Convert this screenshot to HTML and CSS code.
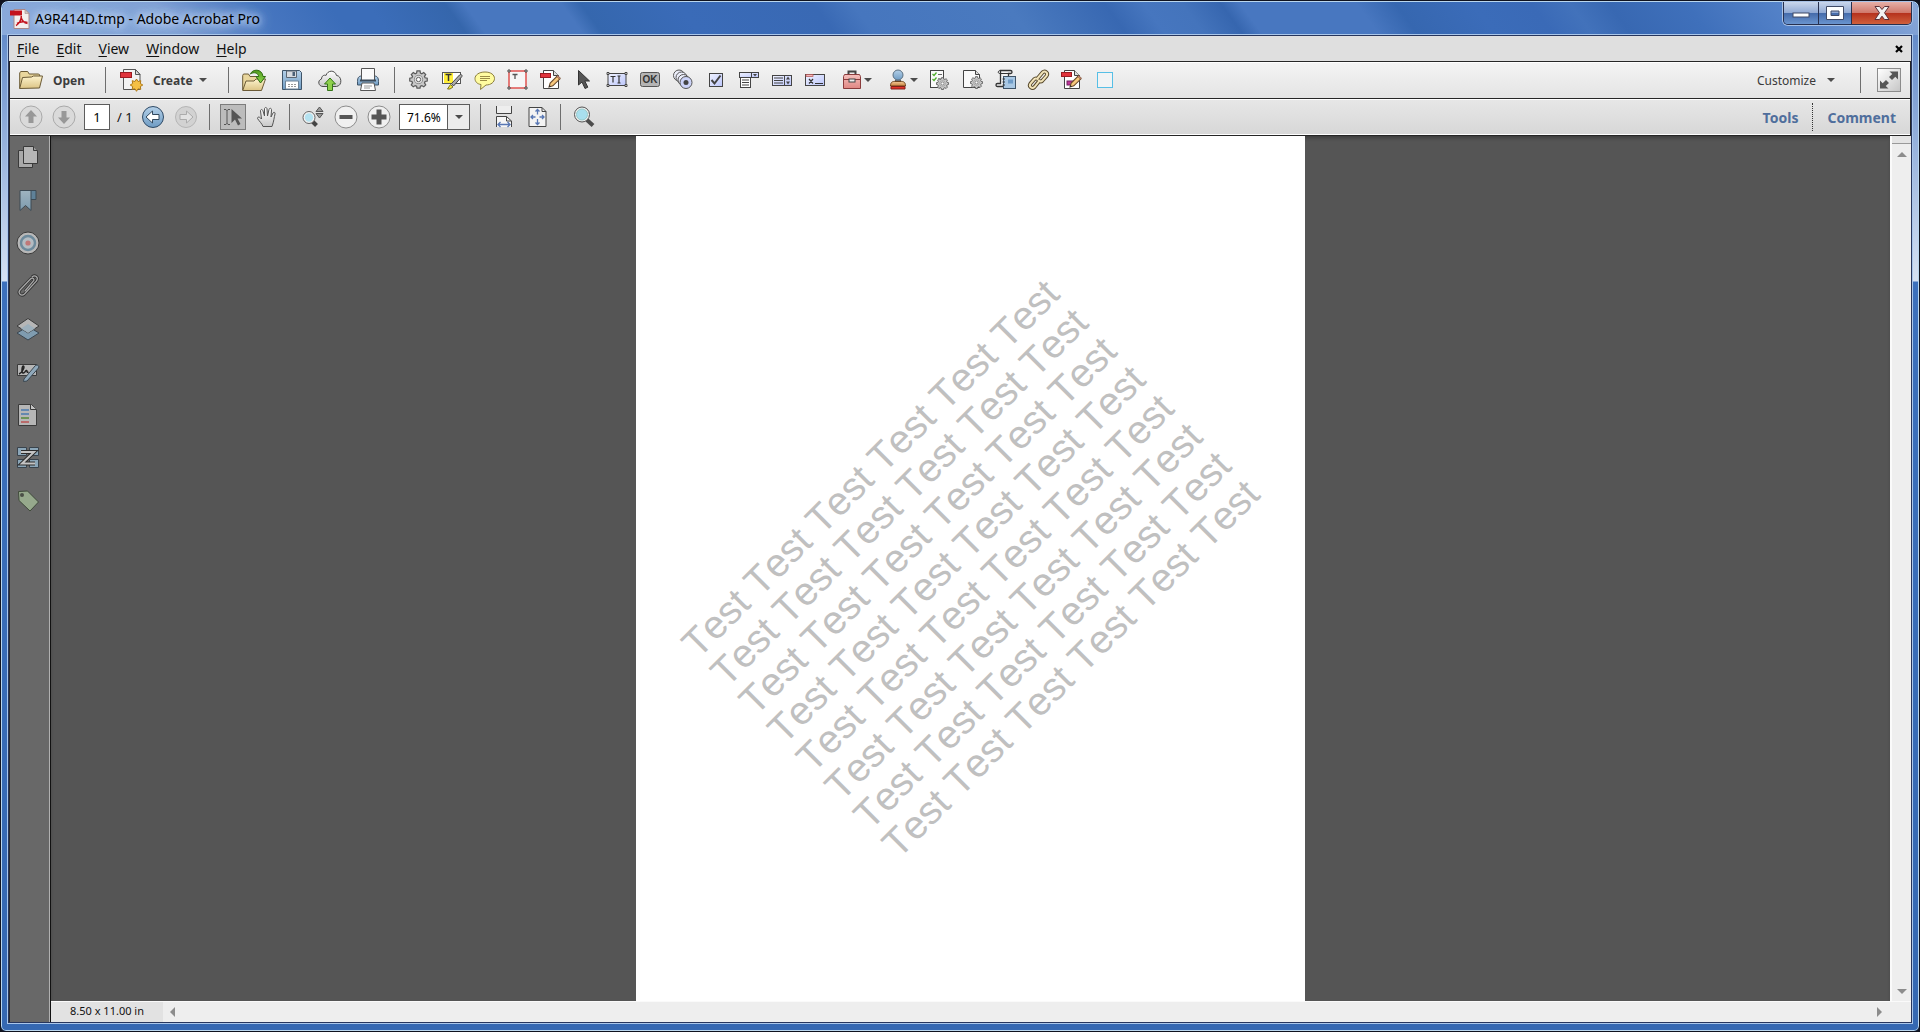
FILE: index.html
```
<!DOCTYPE html>
<html lang="en">
<head>
<meta charset="utf-8">
<title>A9R414D.tmp - Adobe Acrobat Pro</title>
<link rel="stylesheet" href="styles.css">
</head>
<body>
<svg class="defs" width="0" height="0" aria-hidden="true">
  <defs>
    <linearGradient id="folder" x1="0" y1="0" x2="0" y2="1"><stop offset="0" stop-color="#fdf3cd"/><stop offset="1" stop-color="#dcc485"/></linearGradient>
    <linearGradient id="steel" x1="0" y1="0" x2="0" y2="1"><stop offset="0" stop-color="#b4d0e8"/><stop offset="1" stop-color="#6f9cc4"/></linearGradient>
    <linearGradient id="cloud" x1="0" y1="0" x2="0" y2="1"><stop offset="0" stop-color="#fff"/><stop offset="1" stop-color="#c8c8c8"/></linearGradient>
    <linearGradient id="green" x1="0" y1="0" x2="0" y2="1"><stop offset="0" stop-color="#4f9a1c"/><stop offset="1" stop-color="#8fd84e"/></linearGradient>
    <linearGradient id="lilac" x1="0" y1="0" x2="1" y2="1"><stop offset="0" stop-color="#f0f3ff"/><stop offset="1" stop-color="#bcc6fb"/></linearGradient>
    <linearGradient id="pink" x1="0" y1="0" x2="0" y2="1"><stop offset="0" stop-color="#f5c0bd"/><stop offset="1" stop-color="#e08783"/></linearGradient>
    <linearGradient id="wood" x1="0" y1="0" x2="0" y2="1"><stop offset="0" stop-color="#f3cd9b"/><stop offset="1" stop-color="#c97f3a"/></linearGradient>
    <linearGradient id="mute" x1="0" y1="0" x2="0" y2="1"><stop offset="0" stop-color="#9fb4c0"/><stop offset="1" stop-color="#7d9bae"/></linearGradient>
    <symbol id="gear" viewBox="0 0 20 20">
      <path d="M8.400 1h3.200l.4 2.300 1.500.6 2-1.300 2.100 2.100-1.300 2 .6 1.500 2.300.4v3l-2.300.5-.6 1.500 1.300 2-2.100 2.100-2-1.300-1.500.6-.4 2.200H8.400l-.4-2.200-1.500-.6-2 1.300-2.100-2.100 1.300-2-.6-1.500L.8 11.600v-3l2.300-.4.6-1.500-1.300-2 2.100-2.100 2 1.300L8 3.300z" fill="#c9c9c9" stroke="#5a5a5a" stroke-width="1.300"/>
      <circle cx="10" cy="10" r="4.300" fill="#e4e4e4" stroke="#8a8a8a"/><circle cx="10" cy="10" r="2.300" fill="#fafafa" stroke="#5a5a5a"/>
    </symbol>
    <symbol id="pencil" viewBox="0 0 12 12"><path d="M1 11l1-3.500L8.500 1 11 3.500 4.500 10z" fill="#f7c77c" stroke="#6a4a2a"/><path d="M8.200 1.300l2.500 2.500L11.500 3 9 .5z" fill="#f3a29b" stroke="#6a4a2a" stroke-width=".6"/><path d="M.7 11.300l.6-2 1.500 1.400z" fill="#333"/></symbol>
  </defs>
</svg>

<div class="window">
  <header class="titlebar">
    <svg class="app-icon" viewBox="0 0 20 20"><path d="M4 .5h11l4 4v15H4z" fill="#f4f0ee" stroke="#a88"/><path d="M15 .5v4h4z" fill="#cfc8c4" stroke="#a88" stroke-width=".6"/><path d="M0 1.500h12v5H0z" fill="#c4121c"/><path d="M6 16.500c3-1.500 5.600-6 5.300-9.500M11 8c.8 3.500 3 6 6.500 6.500M7 14.500c3-1.800 7-2 10.500-1" fill="none" stroke="#c4121c" stroke-width="1.500"/></svg>
    <h1 class="title">A9R414D.tmp - Adobe Acrobat Pro</h1>
    <div class="window-buttons">
      <button class="win min" aria-label="Minimize"><svg width="20" height="14" viewBox="0 0 20 14"><rect x="2" y="7" width="16" height="4" fill="#fff" stroke="#404a66"/></svg></button>
      <button class="win max" aria-label="Maximize"><svg width="20" height="14" viewBox="0 0 20 14"><path d="M1.500.5h17v13h-17zM6 5v4.500h8V5z" fill="#fff" fill-rule="evenodd" stroke="#404a66"/></svg></button>
      <button class="win close" aria-label="Close"><svg width="16" height="14" viewBox="0 0 16 14"><path d="M1 .5h4.500L8 3.500 10.500.5H15L10.500 6.800 15 13.500h-4.500L8 10.200 5.500 13.500H1L5.500 6.800z" fill="#f2f2f2" stroke="#5a3038"/></svg></button>
    </div>
  </header>

  <div class="frame">
    <nav class="menubar">
      <button><u>F</u>ile</button><button><u>E</u>dit</button><button><u>V</u>iew</button><button><u>W</u>indow</button><button><u>H</u>elp</button>
      <button class="doc-close" aria-label="Close document"><svg width="8" height="8" viewBox="0 0 8 8"><path d="M1 1l6 6M7 1L1 7" stroke="#000" stroke-width="2.200"/></svg></button>
    </nav>

    <div class="toolbar main-tools">
      <div class="group g-open">
        <button class="labelled"><svg class="ic" viewBox="0 0 24 24"><path d="M.7 20.500V5l1-1.500h7l1.500 2.500h9.500l1 1v2" fill="#e9d69d" stroke="#6b5a36"/><path d="M.7 20.500L3.500 9.500l9-.5 2-1h9L20.500 20z" fill="url(#folder)" stroke="#6b5a36"/></svg><b>Open</b></button>
      </div>
      <div class="group g-create">
        <button class="labelled"><svg class="ic" viewBox="0 0 24 24"><path d="M4.500 1.500h12l4.500 5v15H4.500z" fill="#f3f3f3" stroke="#555"/><path d="M16.500 1.500v5H21z" fill="#ddd" stroke="#555"/><rect x="1.500" y="4.500" width="11" height="5" fill="#e0343c" stroke="#9c1c22"/><path d="M17.500 11l1.500 2.500 2.800-.8-.5 2.800 2.500 1.500-2.500 1.500.5 2.800-2.800-.5-1.500 2.500-1.500-2.500-2.800.5.500-2.800-2.500-1.500 2.500-1.500-.5-2.800 2.800.8z" fill="#f5c044" stroke="#b07a18"/></svg><b>Create</b><i class="caret"></i></button>
      </div>
      <div class="group g-file">
        <button class="tool wide" aria-label="Open file"><svg class="ic" viewBox="0 0 24 24"><path d="M.7 22V7.500L1.500 6h5L8 8.500h11.500V12" fill="#e9d69d" stroke="#6b5a36"/><path d="M.7 22.500L4 13h8l2-2h9.500l-4 11.500z" fill="url(#folder)" stroke="#6b5a36"/><path d="M8.500 6C10 1 20 0 21 8.500h2.500L18.500 15 14 8.500h2.700C16.500 5 11.500 3.500 8.500 6z" fill="url(#green)" stroke="#2f6b12"/></svg></button>
        <button class="tool wide" aria-label="Save"><svg class="ic" viewBox="0 0 24 24"><path d="M2.500 2.500h17l2 2v17h-19z" fill="url(#steel)" stroke="#3f5468"/><path d="M6.500 3v6.500h10V3z" fill="#d7dbe0" stroke="#5a6672"/><path d="M12.500 4h2.500v4h-2.500z" fill="#4a6076"/><path d="M5.500 13h13v8h-13z" fill="#fff" stroke="#6d8296"/><path d="M8 16.500h9M8 18.500h9" stroke="#999" stroke-dasharray="2 1"/></svg></button>
        <button class="tool wide" aria-label="Upload"><svg class="ic" viewBox="0 0 24 24"><path d="M5 18.500C.5 18.500-1 12.500 3.500 11c0-3 2.500-4.500 4.500-3.500C9.500 2 17 1.500 18.500 7.500c5 0 6.500 10 0 11z" fill="url(#cloud)" stroke="#4c4c4c"/><path d="M12 10l5.500 6h-3v6.500h-5V16h-3z" fill="#8fd04c" stroke="#35761a"/></svg></button>
        <button class="tool wide" aria-label="Print"><svg class="ic" viewBox="0 0 24 24"><path d="M1.500 13.500c0-4 1.500-5.500 4-5.500h13c2.500 0 4 1.500 4 5.500v3.500h-21z" fill="url(#steel)" stroke="#3f5468"/><path d="M5.500.5h13v12h-13z" fill="#fafafa" stroke="#555"/><path d="M4 12.500h16" stroke="#3c4a58" stroke-width="2"/><path d="M6 15h12l1.500 7.500h-15z" fill="#fff" stroke="#555"/><path d="M8 18h8M8 20h6" stroke="#999"/></svg></button>
      </div>
      <div class="group g-quick">
        <button class="tool" aria-label="Settings"><svg class="ic" viewBox="0 0 24 24"><use href="#gear" x="2" y="2" width="19" height="19"/></svg></button>
        <button class="tool" aria-label="Highlight text"><svg class="ic" viewBox="0 0 24 24"><rect x="2.500" y="4.500" width="18" height="11" fill="#fff" stroke="#555"/><rect x="4" y="5" width="9" height="10" fill="#ffef3a"/><path d="M5.500 6.500h6M8.500 6.500V13" stroke="#333" stroke-width="1.500"/><path d="M11.500 15.500l8-8.500c1.500-1.500 3.500.5 2 2L13.500 18z" fill="#aaa" stroke="#444"/><path d="M10.500 16.500l2.500 2.500-3 2H7.500z" fill="#f1e53a" stroke="#7d7420"/></svg></button>
        <button class="tool" aria-label="Comment note"><svg class="ic" viewBox="0 0 24 24"><path d="M12 4c6 0 9.500 3 9.500 6.500S18 17 13 17l-5.500 4.500.5-5C4 16 2 13.500 2 10.500 2 7 6 4 12 4z" fill="#fffca0" stroke="#8c7f3c"/><path d="M7 8.500h10M7 10.500h10M7 12.500h7" stroke="#9c8d46"/></svg></button>
        <button class="tool" aria-label="Text box"><svg class="ic" viewBox="0 0 24 24"><rect x="3" y="3" width="17" height="17" fill="#f6f6f6" stroke="#e05350" stroke-width="1.500"/><path d="M6.500 6.500h5M9 6.500V11" stroke="#555" stroke-width="1.300"/><path d="M2 2h2v2H2zM19 2h2v2h-2zM2 19h2v2H2zM19 19h2v2h-2z" fill="#fff" stroke="#444"/></svg></button>
        <button class="tool" aria-label="Edit document"><svg class="ic" viewBox="0 0 24 24"><path d="M4.500 2.500h10l5 5v13h-15z" fill="#fff" stroke="#444"/><path d="M14.500 2.500v5h5" fill="#ddd" stroke="#444"/><rect x="1.500" y="5.500" width="10" height="4" fill="#e0343c" stroke="#9c1c22"/><use href="#pencil" x="9" y="6" width="13" height="15"/></svg></button>
        <button class="tool" aria-label="Select object"><svg class="ic" viewBox="0 0 24 24"><path d="M6.500 2.500v14.500l3.500-3 3 6.500 2.800-1.300-3-6.200h4.700z" fill="#555" stroke="#333"/></svg></button>
        <button class="tool" aria-label="Text field"><svg class="ic" viewBox="0 0 24 24"><rect x="3" y="5.500" width="18" height="12" fill="url(#lilac)" stroke="#444"/><path d="M5.500 8.500h5M8 8.500v6M12.500 8h3M14 8v7M12.500 15h3" stroke="#333" stroke-width="1.200" fill="none"/><path d="M2 4.500h2v2H2zM20 4.500h2v2h-2zM2 16.500h2v2H2zM20 16.500h2v2h-2z" fill="#fff" stroke="#444"/></svg></button>
        <button class="tool" aria-label="Button field"><svg class="ic" viewBox="0 0 24 24"><rect x="2.500" y="4.500" width="19" height="14" rx="2" fill="#b4b4b4" stroke="#555"/><text x="12" y="15" class="ok">OK</text></svg></button>
        <button class="tool" aria-label="Radio button"><svg class="ic" viewBox="0 0 24 24"><g fill="#eceefa" stroke="#555"><circle cx="8" cy="7.500" r="5.500"/><circle cx="10.500" cy="9.500" r="5.500"/><circle cx="12.500" cy="12" r="5.500"/></g><circle cx="15" cy="14.500" r="6" fill="#ccd3f8" stroke="#555"/><circle cx="15" cy="14.500" r="2.500" fill="#444"/></svg></button>
        <button class="tool" aria-label="Check box"><svg class="ic" viewBox="0 0 24 24"><rect x="5.500" y="5.500" width="13" height="13" fill="url(#lilac)" stroke="#444"/><path d="M7.500 12l3 3.500 6-8" fill="none" stroke="#444" stroke-width="2"/></svg></button>
        <button class="tool" aria-label="Combo box"><svg class="ic" viewBox="0 0 24 24"><rect x="2.500" y="4.500" width="19" height="5" fill="url(#lilac)" stroke="#444"/><path d="M14.500 4.500v5" stroke="#444"/><path d="M16 6h4l-2 2.500z" fill="#444"/><rect x="3.500" y="9.500" width="10" height="10" fill="#fff" stroke="#444"/><path d="M5 12h7M5 14.500h7M5 17h7" stroke="#444"/></svg></button>
        <button class="tool" aria-label="List box"><svg class="ic" viewBox="0 0 24 24"><rect x="2.500" y="7.500" width="19" height="10" fill="url(#lilac)" stroke="#444"/><path d="M14.500 7.500v10M4 10h9M4 12.500h9M4 15h9" stroke="#444"/><path d="M18 8.500l2 3h-4zM18 16.500l2-3h-4z" fill="#444"/></svg></button>
        <button class="tool" aria-label="Signature field"><svg class="ic" viewBox="0 0 24 24"><rect x="2.500" y="6.500" width="19" height="11" fill="url(#lilac)" stroke="#444"/><rect x="3" y="6.500" width="7" height="2" fill="#f5b9b9" stroke="#b05050" stroke-width=".7"/><path d="M6 11l4 4.500M10 11l-4 4.500M12 15.500h8" stroke="#333" stroke-width="1.200"/></svg></button>
        <button class="tool menu" aria-label="Toolbox"><svg class="ic" viewBox="0 0 24 24"><path d="M8.500 6.500v-3h7v3" fill="none" stroke="#444" stroke-width="2"/><path d="M3.500 8.500l1-2h15l1 2v12h-17z" fill="url(#pink)" stroke="#8a3c3c"/><path d="M3.500 11.500h17" stroke="#8a3c3c"/><rect x="9" y="11" width="6" height="3" fill="#eee" stroke="#444"/></svg><i class="caret"></i></button>
        <button class="tool menu" aria-label="Stamp"><svg class="ic" viewBox="0 0 24 24"><path d="M9.500 12h5l1 4h-7z" fill="#8a8f96" stroke="#555"/><circle cx="12" cy="7" r="5" fill="url(#steel)" stroke="#5b6f80"/><path d="M4.500 18c0-4 2-4.500 4-4.500h7c2 0 4 .5 4 4.500z" fill="url(#wood)" stroke="#6d4520"/><path d="M5 18.500h14v2.500H5z" fill="#e33228" stroke="#80201a"/></svg><i class="caret"></i></button>
        <button class="tool" aria-label="Checklist"><svg class="ic" viewBox="0 0 24 24"><rect x="2.500" y="2.500" width="13" height="17" fill="#fafafa" stroke="#444"/><path d="M4.500 6l1.500 1.500L8.500 4.500M4.500 11l1.500 1.500L8.500 9.500" fill="none" stroke="#4fae2c" stroke-width="1.300"/><path d="M10 6.500h4M10 11h3" stroke="#666"/><use href="#gear" x="8" y="9" width="13" height="13"/></svg></button>
        <button class="tool" aria-label="Document settings"><svg class="ic" viewBox="0 0 24 24"><path d="M2.500 2.500h12l4 4v13h-16z" fill="#fafafa" stroke="#444"/><path d="M14.500 2.500v4h4" fill="#ddd" stroke="#444"/><use href="#gear" x="9" y="8" width="13" height="13"/></svg></button>
        <button class="tool" aria-label="Script"><svg class="ic" viewBox="0 0 24 24"><path d="M6.500 2.500h10c2 0 2 3 0 3h-2v13h-11c-2 0-2-3 0-3h3z" fill="#f2f2f2" stroke="#333" stroke-width="1.300"/><path d="M6.500 2.500c-3 0-3 3.500 0 3h9" fill="none" stroke="#333"/><rect x="9.500" y="8.500" width="12" height="12" fill="#a9c8e4" stroke="#3f5468"/><path d="M8.500 11h2.500M8.500 14h2.500M8.500 17h2.500" stroke="#333"/><rect x="14" y="11.500" width="5" height="4" fill="#6f9cc8"/></svg></button>
        <button class="tool" aria-label="Link"><svg class="ic" viewBox="0 0 24 24"><g fill="none"><path d="M10.500 10.500l5-6c2.500-2.500 6 .5 4 3.500l-4 4.500c-1.500 1.500-3.500 1-4-.5M13 12l-5.500 7c-2.500 2.500-6-.5-4-3.500L7 11.500c1.500-1.500 3.500-1 4 .5" stroke="#57492c" stroke-width="4"/><path d="M10.500 10.500l5-6c2.500-2.500 6 .5 4 3.500l-4 4.500c-1.500 1.500-3.500 1-4-.5M13 12l-5.500 7c-2.500 2.500-6-.5-4-3.500L7 11.500c1.500-1.500 3.500-1 4 .5" stroke="#f1e3b8" stroke-width="2"/></g></svg></button>
        <button class="tool" aria-label="Edit form"><svg class="ic" viewBox="0 0 24 24"><path d="M4.500 2.500h10l5 5v13h-15z" fill="#fff" stroke="#444"/><path d="M14.500 2.500v5h5" fill="#ddd" stroke="#444"/><rect x="1.500" y="4.500" width="10" height="4" fill="#e0343c" stroke="#9c1c22"/><rect x="7" y="13" width="7" height="4" fill="#c0359a" stroke="#702060"/><use href="#pencil" x="9" y="6" width="13" height="15"/></svg></button>
        <button class="tool" aria-label="Rectangle"><svg class="ic" viewBox="0 0 24 24"><rect x="4.500" y="4.500" width="15" height="15" fill="#f1f3f4" stroke="#56bfe6"/></svg></button>
      </div>
      <div class="group g-end">
        <button class="customize">Customize<i class="caret"></i></button>
        <button class="expand" aria-label="Read mode"><svg width="20" height="20" viewBox="0 0 20 20"><path d="M10.500 1.500H19v8l-2.700-2.700-3.300 3.200-3-3 3.300-3zM9.500 18.500H1v-8l2.700 2.700L7 10l3 3-3.300 3z" fill="#555"/></svg></button>
      </div>
    </div>

    <div class="toolbar nav-tools">
      <div class="group g-page">
        <button class="tool" aria-label="Previous page"><svg class="ic" viewBox="0 0 24 24"><circle cx="12" cy="12" r="11" fill="#dadada" stroke="#a9a9a9"/><path d="M12 5l6 6.500h-3.500V18h-5v-6.500H6z" fill="#989898"/></svg></button>
        <button class="tool" aria-label="Next page"><svg class="ic" viewBox="0 0 24 24"><circle cx="12" cy="12" r="11" fill="#dadada" stroke="#a9a9a9"/><path d="M12 19l6-6.500h-3.500V6h-5v6.500H6z" fill="#989898"/></svg></button>
        <input class="page-number" type="text" value="1" aria-label="Page number">
        <span class="page-total">/ 1</span>
        <button class="tool" aria-label="Previous view"><svg class="ic" viewBox="0 0 24 24"><circle cx="12" cy="12" r="10.500" fill="url(#steel)" stroke="#2f4a66"/><path d="M5 12l6.500-6v3.500H18v5h-6.500V18z" fill="#fff" stroke="#33495e"/></svg></button>
        <button class="tool" aria-label="Next view"><svg class="ic" viewBox="0 0 24 24"><circle cx="12" cy="12" r="10.500" fill="#d2d2d2" stroke="#b5b5b5"/><path d="M19 12l-6.500-6v3.500H6v5h6.500V18z" fill="#e2e2e2" stroke="#ababab"/></svg></button>
      </div>
      <div class="group g-select">
        <button class="tool pressed" aria-label="Selection tool"><svg class="ic" viewBox="0 0 24 24"><path d="M3 4.500h2l1 1 1-1h2M3 19.500h2l1-1 1 1h2M6 5v14" fill="none" stroke="#555"/><path d="M10.500 4v14l3.500-3.500 3 6 2.500-1.500-3-5.500H21z" fill="#555"/></svg></button>
        <button class="tool" aria-label="Hand tool"><svg class="ic" viewBox="0 0 24 24"><path d="M8 21.500c-1-3-4-5.500-5.500-8 0-2 2-2 4 .5L5.500 6c0-2 2-2 2.500 0l1.500 5L9.500 4c0-2 2.500-2 2.500 0l.5 7 1.500-6.500c.5-2 2.500-1.500 2.500.5L16 12l2-4c1-1.500 2.500-.5 2 1-1 3.500-1 7-3 12.500z" fill="url(#cloud)" stroke="#555"/></svg></button>
      </div>
      <div class="group g-zoom">
        <button class="tool" aria-label="Marquee zoom"><svg class="ic" viewBox="0 0 24 24"><path d="M11 16l4.500 4.500" stroke="#444" stroke-width="4"/><circle cx="8" cy="12.500" r="6" fill="#f2f2f2" stroke="#666"/><circle cx="8" cy="12.500" r="4.200" fill="#b4e2f0"/><path d="M18.500 2l3.500 4.500h-7zM18.500 13l3.500-4.500h-7z" fill="#999" stroke="#555"/></svg></button>
        <button class="tool" aria-label="Zoom out"><svg class="ic" viewBox="0 0 24 24"><circle cx="12" cy="12" r="11" fill="#f0f0f0" stroke="#8b8b8b"/><path d="M5.500 10h13v4h-13z" fill="#555"/></svg></button>
        <button class="tool" aria-label="Zoom in"><svg class="ic" viewBox="0 0 24 24"><circle cx="12" cy="12" r="11" fill="#f0f0f0" stroke="#8b8b8b"/><path d="M4.500 9.500h5v-5h5v5h5v5h-5v5h-5v-5h-5z" fill="#555"/></svg></button>
        <div class="zoom-box"><input type="text" value="71.6%" aria-label="Zoom"><button aria-label="Zoom levels"><i class="caret"></i></button></div>
      </div>
      <div class="group g-fit">
        <button class="tool" aria-label="Fit width"><svg class="ic" viewBox="0 0 24 24"><path d="M4.500 1v7.500h15V1" fill="#eee" stroke="#444"/><path d="M4.500 22V11.500h10l5 4.500v6" fill="#f6f6f6" stroke="#444"/><path d="M14.500 11.500V16h5" fill="none" stroke="#444"/><path d="M6 19.500h12M8.500 17L6 19.500 8.500 22M15.500 17l2.500 2.500-2.500 2.500" stroke="#5877b4" stroke-width="1.300" fill="none"/></svg></button>
        <button class="tool" aria-label="Fit page"><svg class="ic" viewBox="0 0 24 24"><path d="M4 2.500h13l4 4v15H4z" fill="#f3f3f3" stroke="#444"/><path d="M17 2.500v4h4" fill="none" stroke="#444"/><path d="M12.500 4.500v5M12.500 14v5.500M6 12h4.500M14.500 12H19M10.500 6.500l2-2 2 2M10.500 17.500l2 2 2-2M8 10l-2 2 2 2M17 10l2 2-2 2" stroke="#5877b4" stroke-width="1.300" fill="none"/></svg></button>
      </div>
      <div class="group g-find">
        <button class="tool" aria-label="Find"><svg class="ic" viewBox="0 0 24 24"><path d="M15 15l6 5.500" stroke="#4c4c4c" stroke-width="4"/><circle cx="10" cy="9.500" r="7.500" fill="#eee" stroke="#555"/><circle cx="10" cy="9.500" r="5.500" fill="#a9dfee" stroke="#9cc"/></svg></button>
      </div>
      <div class="group g-panes">
        <button class="pane">Tools</button><button class="pane">Comment</button>
      </div>
    </div>

    <main class="workspace">
      <aside class="sidebar">
        <button aria-label="Page thumbnails"><svg class="ic" viewBox="0 0 24 24"><path d="M2.500 5.500h14v17h-14z" fill="#a9a9a9" stroke="#3a3a3a"/><path d="M7.500 1.500h10l4 4v13h-14z" fill="#b6b6b6" stroke="#3a3a3a"/><path d="M17.500 1.500v4h4" fill="#999" stroke="#3a3a3a"/></svg></button>
        <button aria-label="Bookmarks"><svg class="ic" viewBox="0 0 24 24"><path d="M14 2.500h6v9h-6z" fill="#5f8198" stroke="#3c4a54"/><path d="M4 2.500h11v20l-5.500-5L4 22.500z" fill="url(#mute)" stroke="#3c4a54"/></svg></button>
        <button aria-label="Destinations"><svg class="ic" viewBox="0 0 24 24"><circle cx="12" cy="12" r="11" fill="#b8b8b8" stroke="#3a3a3a"/><circle cx="12" cy="12" r="7" fill="#b4bcc2" stroke="#6d8a9c" stroke-width="2.500"/><circle cx="12" cy="12" r="2.600" fill="#c07878"/></svg></button>
        <button aria-label="Attachments"><svg class="ic" viewBox="0 0 24 24"><g fill="none"><path d="M9 17l8.500-10c1.500-2-1-4-3-2L4 16c-2.500 3 1 7 4.500 4L20.500 7c2.500-4-1.500-6.500-4.500-4" stroke="#333" stroke-width="3"/><path d="M9 17l8.500-10c1.500-2-1-4-3-2L4 16c-2.500 3 1 7 4.500 4L20.500 7c2.500-4-1.500-6.500-4.500-4" stroke="#aaa" stroke-width="1.200"/></g></svg></button>
        <button aria-label="Layers"><svg class="ic" viewBox="0 0 24 24"><path d="M12 9.500l11 6.500-11 7-11-7z" fill="#7f9cb0" stroke="#3a4650"/><path d="M12 1.500L23 9l-11 7L1 9z" fill="#b6b6b6" stroke="#3a3a3a"/><path d="M5 11.500l7-4.500 7 4.500-7 4.500z" fill="#9db0bc"/></svg></button>
        <button aria-label="Signatures"><svg class="ic" viewBox="0 0 24 24"><path d="M1.500 4.500h19v11h-19z" fill="#b6b6b6" stroke="#3a3a3a"/><path d="M3 14c3-1 6-7 4.500-8S5 14 7.500 13s2-3 3-2.500 0 2.500 2 1.500" fill="none" stroke="#222" stroke-width="1.500"/><path d="M8 19L19 6c1.500-2 5-.5 3.500 2L11 21l-3.500.5z" fill="#8fa8ba" stroke="#3a4650"/></svg></button>
        <button aria-label="Content"><svg class="ic" viewBox="0 0 24 24"><path d="M2.500 1.500h13l5 5v16h-18z" fill="#b6b6b6" stroke="#3a3a3a"/><path d="M14.500 1.500v5h6" fill="#c4c4c4" stroke="#3a3a3a"/><path d="M5 7h8" stroke="#6488b0" stroke-width="2"/><path d="M5 11h8" stroke="#6488b0" stroke-width="2"/><path d="M5 15h8" stroke="#6d9458" stroke-width="2"/><path d="M5 19h8" stroke="#b86a6a" stroke-width="2"/></svg></button>
        <button aria-label="Order"><svg class="ic" viewBox="0 0 24 24"><path d="M1.500 1.500h9v8h-9zM13.500 1.500h9v8h-9zM1.500 13.500h9v8h-9zM13.500 13.500h9v8h-9z" fill="#8ba6b8" stroke="#39434c"/><path d="M5 6h13L6 17.500h13" fill="none" stroke="#2c2c2c" stroke-width="4"/><path d="M5 6h13L6 17.500h13" fill="none" stroke="#c4c4c4" stroke-width="2"/></svg></button>
        <button aria-label="Tags"><svg class="ic" viewBox="0 0 24 24"><path d="M2.500 2.500l9-.5 11 11-8.500 9L3 11.500z" fill="#96a98c" stroke="#3f4a3a"/><circle cx="6" cy="6" r="2" fill="#4a4f46"/></svg></button>
      </aside>
      <section class="viewer">
        <div class="canvas">
          <svg class="page" viewBox="0 0 612 792">
            <g class="watermark" transform="translate(57 479) rotate(-45)">
              <text y="0">Test Test Test Test Test Test</text>
              <text y="37">Test Test Test Test Test Test</text>
              <text y="74">Test Test Test Test Test Test</text>
              <text y="111">Test Test Test Test Test Test</text>
              <text y="148">Test Test Test Test Test Test</text>
              <text y="185">Test Test Test Test Test Test</text>
              <text y="222">Test Test Test Test Test Test</text>
              <text y="259">Test Test Test Test Test Test</text>
            </g>
          </svg>
        </div>
        <div class="vscroll"><i class="split"></i><i class="up"></i><i class="down"></i></div>
        <footer class="status"><span class="size">8.50 x 11.00 in</span><div class="hscroll"><i class="left"></i><i class="right"></i></div></footer>
      </section>
    </main>
  </div>
</div>
</body>
</html>
```

FILE: styles.css
```
* { box-sizing: border-box; }

body {
  margin: 0;
  background: #10131f;
  font-family: "Noto Sans", "Open Sans", sans-serif;
  font-size: 13px;
  color: #111;
}

button {
  margin: 0;
  padding: 0;
  border: 0;
  background: none;
  font: inherit;
  color: inherit;
}

.defs { position: absolute; }

.window {
  display: flex;
  flex-direction: column;
  height: 100vh;
  padding: 0 7px 8px;
  border: 1px solid #10131f;
  border-radius: 8px 8px 6px 6px;
  background:
    linear-gradient(#5580c4 0, #d5e1f3 280px, #3c70bc 281px, #3568b2 100%);
  box-shadow: inset 0 0 0 1px #b9d6ee;
  overflow: hidden;
}

/* Title bar */
.titlebar {
  display: flex;
  align-items: center;
  height: 33px;
  margin: 1px -6px 0;
  padding-left: 8px;
  border-radius: 7px 7px 0 0;
  background: linear-gradient(54deg,
    #8aaadb 0%, #7fa0d5 9%, #4776c0 14%, #3b6db9 18%, #3b6db9 20%, #3566ac 24%,
    #4877bf 25%, #4877bf 30%, #3567ae 31%, #3a6bb8 36%, #3969b4 43%,
    #4676be 45%, #4a7abf 53%, #3868b2 58%, #4676bf 60%, #4474bc 62%, #3666af 64%,
    #4877c0 65%, #4877c0 71%, #3667b0 73%, #3b6cb9 77%, #3a6ab7 80%, #4272bb 82%,
    #3868b2 84%, #3f70bb 88%, #5583c9 93%, #8aa8d8 100%);
}

.app-icon { width: 20px; height: 20px; }

.title {
  flex: 1;
  margin: 0 0 0 5px;
  font-size: 14px;
  font-weight: 400;
  color: #000;
  text-shadow: 0 0 6px #b9d0f0, 0 0 8px #cfe0f7, 0 0 14px #b9d0f0, 0 0 16px #b9d0f0;
}

.window-buttons {
  display: flex;
  align-self: flex-start;
  margin-right: 6px;
  border: 1px solid #27304f;
  border-top: 0;
  border-radius: 0 0 5px 5px;
  box-shadow: 0 0 0 1px #a9c2e6;
  overflow: hidden;
}

.win {
  display: flex;
  align-items: center;
  justify-content: center;
  height: 22px;
  border-right: 1px solid #27304f;
  background: linear-gradient(#c9d6ec, #92aad4 48%, #446aa9 50%, #6a94cf);
}
.min { width: 35px; }
.max { width: 33px; }
.close {
  width: 59px;
  border-right: 0;
  background: linear-gradient(#e6b0a8, #d0796c 48%, #b5301c 50%, #d0603c);
}

/* Frame inside the glass border */
.frame {
  display: flex;
  flex: 1;
  flex-direction: column;
  min-height: 0;
  border: 1px solid #27355c;
  box-shadow: 0 0 0 1px #a9c6ea;
}

.menubar {
  display: flex;
  align-items: center;
  gap: 17px;
  height: 25px;
  padding: 0 8px;
  background: #dfdfdf;
  font-size: 14px;
}
.menubar u { text-underline-offset: 2px; }
.doc-close { display: flex; margin-left: auto; }

/* Toolbars */
.toolbar {
  display: flex;
  align-items: center;
  border: 1px solid #262626;
  border-bottom: 0;
}
.main-tools { height: 37px; background: linear-gradient(#f4f4f4, #e4e4e4); box-shadow: inset 0 1px #fff; }
.nav-tools { height: 37px; background: linear-gradient(#e7e7e7, #d7d7d7); box-shadow: inset 0 1px #fff, inset 0 -1px #fff; }

.group {
  display: flex;
  align-items: center;
  height: 26px;
  border-right: 1px solid #6e6e6e;
}
.ic { display: block; width: 24px; height: 24px; flex: none; }
.tool {
  display: flex;
  align-items: center;
  justify-content: center;
  width: 33px;
  height: 26px;
}
.tool.wide { width: 38px; }
.tool.menu { width: 46px; padding-left: 4px; }
.labelled { display: flex; align-items: center; gap: 10px; color: #3d3d3d; font-size: 12px; }
.labelled .caret { margin-left: -4px; }

.caret {
  width: 0;
  height: 0;
  border: 4px solid transparent;
  border-top-color: #4c4c4c;
  border-bottom: 0;
}

.g-open { width: 96px; padding-left: 9px; }
.g-create { width: 123px; padding-left: 13px; }
.g-file { width: 166px; padding-left: 6px; }
.g-quick { flex: 1; padding-left: 7px; border: 0; }
.g-end { gap: 16px; border: 0; padding-right: 9px; }
.customize {
  display: flex;
  align-items: center;
  gap: 11px;
  height: 26px;
  padding-right: 25px;
  border-right: 1px solid #6e6e6e;
  font-size: 12px;
  color: #3a3a3a;
}
.expand {
  display: flex;
  align-items: center;
  justify-content: center;
  width: 24px;
  height: 24px;
  border: 1px solid #8c8c8c;
  background: linear-gradient(135deg, #fff, #c6c6c6);
}

.g-page { width: 200px; padding-left: 4px; }
.page-number {
  width: 26px;
  height: 26px;
  margin-left: 4px;
  padding: 0;
  border: 1px solid #5c5c5c;
  background: #fff;
  font: inherit;
  text-align: center;
}
.page-total { width: 26px; padding-left: 7px; white-space: nowrap; }
.g-select { width: 80px; padding-left: 10px; gap: 4px; }
.pressed { width: 26px; border: 1px solid #7c7c7c; background: #bcbcbc; }
.g-zoom { width: 191px; padding-left: 6px; }
.zoom-box {
  display: flex;
  width: 71px;
  height: 26px;
  margin-left: 4px;
  border: 1px solid #5c5c5c;
}
.zoom-box input {
  width: 47px;
  padding: 0 0 0 7px;
  border: 0;
  background: #fff;
  font: inherit;
  font-size: 12px;
}
.zoom-box button {
  display: flex;
  flex: 1;
  align-items: center;
  justify-content: center;
  border-left: 1px solid #5c5c5c;
  background: #ececec;
}
.g-fit { width: 80px; padding-left: 6px; }
.g-find { padding-left: 6px; border: 0; }
.g-panes { margin-left: auto; border: 0; }
.pane { padding: 0 14px; color: #4f6e9c; font-size: 14px; font-weight: 700; height: 28px; }
.pane + .pane { border-left: 1px dotted #333; }

/* Workspace */
.workspace {
  display: flex;
  flex: 1;
  min-height: 0;
  border-top: 1px solid #262626;
}
.sidebar {
  display: flex;
  flex-direction: column;
  gap: 19px;
  width: 42px;
  padding: 9px 0 0 6px;
  border-right: 1px solid #111;
  border-left: 1px solid #2c2c2c;
  background: #686868;
  box-shadow: inset -1px 0 #b0b0b0;
}
.sidebar button { width: 24px; height: 24px; }

.viewer {
  display: grid;
  flex: 1;
  grid-template-columns: 1fr 21px;
  grid-template-rows: 1fr 21px;
  min-width: 0;
  background: #eee;
}
.canvas {
  display: flex;
  justify-content: center;
  min-height: 0;
  background: #555;
  box-shadow: inset 0 3px 4px -2px #333;
  overflow: hidden;
}
.page {
  flex: none;
  align-self: flex-start;
  width: 669px;
  background: #fff;
}
.watermark {
  font-family: "Liberation Sans", Arial, sans-serif;
  font-size: 36px;
  font-kerning: none;
  fill: #c0c0c0;
}
.ok { font: 700 10px "Liberation Sans", Arial, sans-serif; fill: #333; text-anchor: middle; }

.vscroll {
  display: flex;
  flex-direction: column;
  align-items: center;
  padding-bottom: 7px;
  border-left: 2px solid #fafafa;
}
.split { width: 100%; height: 8px; border-bottom: 1px solid #999; background: #e4e4e4; }
.up, .down, .left, .right { width: 0; height: 0; border: 5px solid transparent; }
.up { margin-top: 8px; border-top: 0; border-bottom-color: #8c8c8c; }
.down { margin-top: auto; border-bottom: 0; border-top-color: #8c8c8c; }

.status {
  display: flex;
  grid-column: 1 / -1;
  border-top: 1px solid #fafafa;
}
.size { width: 112px; padding-left: 19px; background: #e2e2e2; font-size: 11px; line-height: 18px; white-space: nowrap; }
.hscroll { display: flex; flex: 1; align-items: center; justify-content: space-between; padding: 0 29px 0 7px; }
.left { border-left: 0; border-right-color: #8c8c8c; }
.right { border-right: 0; border-left-color: #8c8c8c; }
```
